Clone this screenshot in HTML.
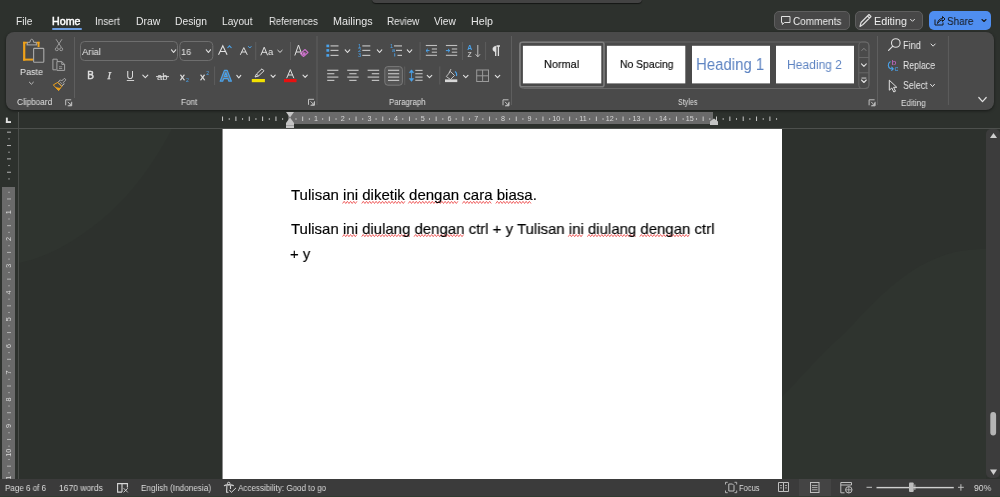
<!DOCTYPE html><html><head><meta charset="utf-8"><style>*{margin:0;padding:0;box-sizing:border-box}
html,body{width:1000px;height:497px;overflow:hidden}
body{background:#2d312d;font-family:"Liberation Sans",sans-serif;position:relative}
.a{position:absolute}
.tx{position:absolute;white-space:pre;line-height:1;transform-origin:0 0;will-change:transform}
svg.ic{position:absolute;left:0;top:0;width:1000px;height:497px;will-change:transform}
</style></head><body>
<div class="a" style="left:371.7px;top:-10px;width:270px;height:12.6px;background:#434343;border-radius:4px;box-shadow:0 0.8px 1px rgba(0,0,0,.55)"></div>
<div class="a" style="left:52px;top:28px;width:30px;height:2px;background:#6b9ce0;border-radius:1px"></div>
<div class="a" style="left:774px;top:11px;width:76px;height:19px;border:1px solid #5e5e5e;border-radius:5px;background:#474747"></div>
<div class="a" style="left:855px;top:11px;width:68px;height:19px;border:1px solid #5e5e5e;border-radius:5px;background:#474747"></div>
<div class="a" style="left:929px;top:11px;width:62px;height:19px;border-radius:5px;background:#4f8ef0"></div>
<div class="a" style="left:6px;top:32px;width:988px;height:78px;background:#4a4a4a;border-radius:8px;box-shadow:0 1px 3px rgba(0,0,0,.5)"></div>
<div class="a" style="left:18px;top:112px;width:1px;height:367px;background:#4a4d4a"></div>
<div class="a" style="left:0;top:128px;width:1000px;height:1px;background:#4d504d"></div>
<div class="a" style="left:288px;top:112px;width:425px;height:12px;background:#6a6a6a"></div>
<div class="a" style="left:2px;top:187px;width:13px;height:292px;background:#6a6a6a"></div>
<svg class="a" style="left:0;top:0" width="1000" height="497"><path d="M19 129H172C150 170 120 215 60 248C45 256 30 261 19 263Z" fill="#2f342f"/><path d="M782 397C800 378 825 350 845 333C870 305 895 280 920 266C945 252 965 249 986 249V479H782Z" fill="#2f342f"/></svg>
<div class="a" style="left:222px;top:129px;width:1px;height:350px;background:#8c8c8c"></div>
<div class="a" style="left:223px;top:129px;width:559px;height:350px;background:#fff"></div>
<div class="a" style="left:986px;top:129px;width:14px;height:349px;background:#3c3c3c;border-radius:5px"></div>
<div class="a" style="left:0;top:479px;width:1000px;height:18px;background:#3b3b3b"></div>
<div class="a" style="left:799px;top:479px;width:32px;height:17px;background:#444444"></div>
<div class="a" style="left:0;top:496px;width:1000px;height:1px;background:#2f3b30"></div>

<svg class="ic" viewBox="0 0 1000 497">
<rect x="222.05" y="116.5" width="1" height="4.5" fill="#c8c8c8" rx="0"/>
<rect x="228.72500000000002" y="118.2" width="1" height="1.6" fill="#c8c8c8" rx="0"/>
<rect x="235.4" y="116.5" width="1" height="4.5" fill="#c8c8c8" rx="0"/>
<rect x="242.07500000000002" y="118.2" width="1" height="1.6" fill="#c8c8c8" rx="0"/>
<rect x="248.75" y="116.5" width="1" height="4.5" fill="#c8c8c8" rx="0"/>
<rect x="255.425" y="118.2" width="1" height="1.6" fill="#c8c8c8" rx="0"/>
<rect x="262.1" y="116.5" width="1" height="4.5" fill="#c8c8c8" rx="0"/>
<rect x="268.77500000000003" y="118.2" width="1" height="1.6" fill="#c8c8c8" rx="0"/>
<rect x="275.45" y="116.5" width="1" height="4.5" fill="#c8c8c8" rx="0"/>
<rect x="282.125" y="118.2" width="1" height="1.6" fill="#c8c8c8" rx="0"/>
<rect x="295.475" y="118.2" width="1" height="1.6" fill="#c8c8c8" rx="0"/>
<rect x="302.15000000000003" y="116.5" width="1" height="4.5" fill="#c8c8c8" rx="0"/>
<rect x="308.825" y="118.2" width="1" height="1.6" fill="#c8c8c8" rx="0"/>
<text x="316.0" y="121.3" font-size="7.2" fill="#d8d8d8" text-anchor="middle" font-family="Liberation Sans">1</text>
<rect x="322.175" y="118.2" width="1" height="1.6" fill="#c8c8c8" rx="0"/>
<rect x="328.85" y="116.5" width="1" height="4.5" fill="#c8c8c8" rx="0"/>
<rect x="335.52500000000003" y="118.2" width="1" height="1.6" fill="#c8c8c8" rx="0"/>
<text x="342.7" y="121.3" font-size="7.2" fill="#d8d8d8" text-anchor="middle" font-family="Liberation Sans">2</text>
<rect x="348.875" y="118.2" width="1" height="1.6" fill="#c8c8c8" rx="0"/>
<rect x="355.55" y="116.5" width="1" height="4.5" fill="#c8c8c8" rx="0"/>
<rect x="362.225" y="118.2" width="1" height="1.6" fill="#c8c8c8" rx="0"/>
<text x="369.4" y="121.3" font-size="7.2" fill="#d8d8d8" text-anchor="middle" font-family="Liberation Sans">3</text>
<rect x="375.575" y="118.2" width="1" height="1.6" fill="#c8c8c8" rx="0"/>
<rect x="382.25" y="116.5" width="1" height="4.5" fill="#c8c8c8" rx="0"/>
<rect x="388.925" y="118.2" width="1" height="1.6" fill="#c8c8c8" rx="0"/>
<text x="396.1" y="121.3" font-size="7.2" fill="#d8d8d8" text-anchor="middle" font-family="Liberation Sans">4</text>
<rect x="402.275" y="118.2" width="1" height="1.6" fill="#c8c8c8" rx="0"/>
<rect x="408.95" y="116.5" width="1" height="4.5" fill="#c8c8c8" rx="0"/>
<rect x="415.625" y="118.2" width="1" height="1.6" fill="#c8c8c8" rx="0"/>
<text x="422.8" y="121.3" font-size="7.2" fill="#d8d8d8" text-anchor="middle" font-family="Liberation Sans">5</text>
<rect x="428.975" y="118.2" width="1" height="1.6" fill="#c8c8c8" rx="0"/>
<rect x="435.65" y="116.5" width="1" height="4.5" fill="#c8c8c8" rx="0"/>
<rect x="442.32500000000005" y="118.2" width="1" height="1.6" fill="#c8c8c8" rx="0"/>
<text x="449.5" y="121.3" font-size="7.2" fill="#d8d8d8" text-anchor="middle" font-family="Liberation Sans">6</text>
<rect x="455.675" y="118.2" width="1" height="1.6" fill="#c8c8c8" rx="0"/>
<rect x="462.35" y="116.5" width="1" height="4.5" fill="#c8c8c8" rx="0"/>
<rect x="469.025" y="118.2" width="1" height="1.6" fill="#c8c8c8" rx="0"/>
<text x="476.2" y="121.3" font-size="7.2" fill="#d8d8d8" text-anchor="middle" font-family="Liberation Sans">7</text>
<rect x="482.375" y="118.2" width="1" height="1.6" fill="#c8c8c8" rx="0"/>
<rect x="489.05" y="116.5" width="1" height="4.5" fill="#c8c8c8" rx="0"/>
<rect x="495.725" y="118.2" width="1" height="1.6" fill="#c8c8c8" rx="0"/>
<text x="502.9" y="121.3" font-size="7.2" fill="#d8d8d8" text-anchor="middle" font-family="Liberation Sans">8</text>
<rect x="509.07500000000005" y="118.2" width="1" height="1.6" fill="#c8c8c8" rx="0"/>
<rect x="515.75" y="116.5" width="1" height="4.5" fill="#c8c8c8" rx="0"/>
<rect x="522.425" y="118.2" width="1" height="1.6" fill="#c8c8c8" rx="0"/>
<text x="529.6" y="121.3" font-size="7.2" fill="#d8d8d8" text-anchor="middle" font-family="Liberation Sans">9</text>
<rect x="535.775" y="118.2" width="1" height="1.6" fill="#c8c8c8" rx="0"/>
<rect x="542.45" y="116.5" width="1" height="4.5" fill="#c8c8c8" rx="0"/>
<rect x="549.125" y="118.2" width="1" height="1.6" fill="#c8c8c8" rx="0"/>
<text x="556.3" y="121.3" font-size="7.2" fill="#d8d8d8" text-anchor="middle" font-family="Liberation Sans">10</text>
<rect x="562.475" y="118.2" width="1" height="1.6" fill="#c8c8c8" rx="0"/>
<rect x="569.15" y="116.5" width="1" height="4.5" fill="#c8c8c8" rx="0"/>
<rect x="575.825" y="118.2" width="1" height="1.6" fill="#c8c8c8" rx="0"/>
<text x="583.0" y="121.3" font-size="7.2" fill="#d8d8d8" text-anchor="middle" font-family="Liberation Sans">11</text>
<rect x="589.175" y="118.2" width="1" height="1.6" fill="#c8c8c8" rx="0"/>
<rect x="595.85" y="116.5" width="1" height="4.5" fill="#c8c8c8" rx="0"/>
<rect x="602.525" y="118.2" width="1" height="1.6" fill="#c8c8c8" rx="0"/>
<text x="609.7" y="121.3" font-size="7.2" fill="#d8d8d8" text-anchor="middle" font-family="Liberation Sans">12</text>
<rect x="615.875" y="118.2" width="1" height="1.6" fill="#c8c8c8" rx="0"/>
<rect x="622.55" y="116.5" width="1" height="4.5" fill="#c8c8c8" rx="0"/>
<rect x="629.225" y="118.2" width="1" height="1.6" fill="#c8c8c8" rx="0"/>
<text x="636.4" y="121.3" font-size="7.2" fill="#d8d8d8" text-anchor="middle" font-family="Liberation Sans">13</text>
<rect x="642.575" y="118.2" width="1" height="1.6" fill="#c8c8c8" rx="0"/>
<rect x="649.25" y="116.5" width="1" height="4.5" fill="#c8c8c8" rx="0"/>
<rect x="655.925" y="118.2" width="1" height="1.6" fill="#c8c8c8" rx="0"/>
<text x="663.1" y="121.3" font-size="7.2" fill="#d8d8d8" text-anchor="middle" font-family="Liberation Sans">14</text>
<rect x="669.275" y="118.2" width="1" height="1.6" fill="#c8c8c8" rx="0"/>
<rect x="675.95" y="116.5" width="1" height="4.5" fill="#c8c8c8" rx="0"/>
<rect x="682.625" y="118.2" width="1" height="1.6" fill="#c8c8c8" rx="0"/>
<text x="689.8" y="121.3" font-size="7.2" fill="#d8d8d8" text-anchor="middle" font-family="Liberation Sans">15</text>
<rect x="695.975" y="118.2" width="1" height="1.6" fill="#c8c8c8" rx="0"/>
<rect x="702.65" y="116.5" width="1" height="4.5" fill="#c8c8c8" rx="0"/>
<rect x="709.325" y="118.2" width="1" height="1.6" fill="#c8c8c8" rx="0"/>
<rect x="716.0" y="116.5" width="1" height="4.5" fill="#c8c8c8" rx="0"/>
<rect x="722.675" y="118.2" width="1" height="1.6" fill="#c8c8c8" rx="0"/>
<rect x="729.35" y="116.5" width="1" height="4.5" fill="#c8c8c8" rx="0"/>
<rect x="736.025" y="118.2" width="1" height="1.6" fill="#c8c8c8" rx="0"/>
<rect x="742.7" y="116.5" width="1" height="4.5" fill="#c8c8c8" rx="0"/>
<rect x="749.375" y="118.2" width="1" height="1.6" fill="#c8c8c8" rx="0"/>
<rect x="756.05" y="116.5" width="1" height="4.5" fill="#c8c8c8" rx="0"/>
<rect x="762.725" y="118.2" width="1" height="1.6" fill="#c8c8c8" rx="0"/>
<rect x="769.4" y="116.5" width="1" height="4.5" fill="#c8c8c8" rx="0"/>
<rect x="776.075" y="118.2" width="1" height="1.6" fill="#c8c8c8" rx="0"/>
<path d="M286 112H294L290 117.5Z" stroke="none" stroke-width="0" fill="#c4c4c4" />
<path d="M290 117.5L294 123H286Z" stroke="none" stroke-width="0" fill="#c4c4c4" />
<rect x="286" y="123" width="8" height="5" fill="#c4c4c4" rx="0"/>
<rect x="286" y="125.3" width="8" height="0.6" fill="#8a8a8a" rx="0"/>
<path d="M710 125V121.5L714 118.5L718 121.5V125Z" stroke="none" stroke-width="0" fill="#c4c4c4" />
<clipPath id="vr"><rect x="0" y="129" width="18" height="350"/></clipPath><g clip-path="url(#vr)">
<rect x="7" y="131.66" width="4" height="1" fill="#b4b4b4" rx="0"/>
<rect x="8.3" y="138.34" width="1.4" height="1" fill="#b4b4b4" rx="0"/>
<rect x="7" y="145.01999999999998" width="4" height="1" fill="#b4b4b4" rx="0"/>
<rect x="8.3" y="151.7" width="1.4" height="1" fill="#b4b4b4" rx="0"/>
<rect x="7" y="158.38" width="4" height="1" fill="#b4b4b4" rx="0"/>
<rect x="8.3" y="165.06" width="1.4" height="1" fill="#b4b4b4" rx="0"/>
<rect x="7" y="171.74" width="4" height="1" fill="#b4b4b4" rx="0"/>
<rect x="8.3" y="178.42" width="1.4" height="1" fill="#b4b4b4" rx="0"/>
<rect x="8.3" y="191.78" width="1.4" height="1" fill="#b4b4b4" rx="0"/>
<rect x="7" y="198.45999999999998" width="4" height="1" fill="#b4b4b4" rx="0"/>
<rect x="8.3" y="205.14" width="1.4" height="1" fill="#b4b4b4" rx="0"/>
<text x="0" y="0" font-size="7.2" fill="#dadada" text-anchor="middle" font-family="Liberation Sans" transform="translate(11.3 212.3) rotate(-90)">1</text>
<rect x="8.3" y="218.5" width="1.4" height="1" fill="#b4b4b4" rx="0"/>
<rect x="7" y="225.18" width="4" height="1" fill="#b4b4b4" rx="0"/>
<rect x="8.3" y="231.85999999999999" width="1.4" height="1" fill="#b4b4b4" rx="0"/>
<text x="0" y="0" font-size="7.2" fill="#dadada" text-anchor="middle" font-family="Liberation Sans" transform="translate(11.3 239.0) rotate(-90)">2</text>
<rect x="8.3" y="245.22" width="1.4" height="1" fill="#b4b4b4" rx="0"/>
<rect x="7" y="251.89999999999998" width="4" height="1" fill="#b4b4b4" rx="0"/>
<rect x="8.3" y="258.58" width="1.4" height="1" fill="#b4b4b4" rx="0"/>
<text x="0" y="0" font-size="7.2" fill="#dadada" text-anchor="middle" font-family="Liberation Sans" transform="translate(11.3 265.8) rotate(-90)">3</text>
<rect x="8.3" y="271.94" width="1.4" height="1" fill="#b4b4b4" rx="0"/>
<rect x="7" y="278.62" width="4" height="1" fill="#b4b4b4" rx="0"/>
<rect x="8.3" y="285.29999999999995" width="1.4" height="1" fill="#b4b4b4" rx="0"/>
<text x="0" y="0" font-size="7.2" fill="#dadada" text-anchor="middle" font-family="Liberation Sans" transform="translate(11.3 292.5) rotate(-90)">4</text>
<rect x="8.3" y="298.65999999999997" width="1.4" height="1" fill="#b4b4b4" rx="0"/>
<rect x="7" y="305.34" width="4" height="1" fill="#b4b4b4" rx="0"/>
<rect x="8.3" y="312.02" width="1.4" height="1" fill="#b4b4b4" rx="0"/>
<text x="0" y="0" font-size="7.2" fill="#dadada" text-anchor="middle" font-family="Liberation Sans" transform="translate(11.3 319.2) rotate(-90)">5</text>
<rect x="8.3" y="325.38" width="1.4" height="1" fill="#b4b4b4" rx="0"/>
<rect x="7" y="332.05999999999995" width="4" height="1" fill="#b4b4b4" rx="0"/>
<rect x="8.3" y="338.74" width="1.4" height="1" fill="#b4b4b4" rx="0"/>
<text x="0" y="0" font-size="7.2" fill="#dadada" text-anchor="middle" font-family="Liberation Sans" transform="translate(11.3 345.9) rotate(-90)">6</text>
<rect x="8.3" y="352.1" width="1.4" height="1" fill="#b4b4b4" rx="0"/>
<rect x="7" y="358.78" width="4" height="1" fill="#b4b4b4" rx="0"/>
<rect x="8.3" y="365.46" width="1.4" height="1" fill="#b4b4b4" rx="0"/>
<text x="0" y="0" font-size="7.2" fill="#dadada" text-anchor="middle" font-family="Liberation Sans" transform="translate(11.3 372.6) rotate(-90)">7</text>
<rect x="8.3" y="378.82" width="1.4" height="1" fill="#b4b4b4" rx="0"/>
<rect x="7" y="385.5" width="4" height="1" fill="#b4b4b4" rx="0"/>
<rect x="8.3" y="392.17999999999995" width="1.4" height="1" fill="#b4b4b4" rx="0"/>
<text x="0" y="0" font-size="7.2" fill="#dadada" text-anchor="middle" font-family="Liberation Sans" transform="translate(11.3 399.4) rotate(-90)">8</text>
<rect x="8.3" y="405.53999999999996" width="1.4" height="1" fill="#b4b4b4" rx="0"/>
<rect x="7" y="412.22" width="4" height="1" fill="#b4b4b4" rx="0"/>
<rect x="8.3" y="418.9" width="1.4" height="1" fill="#b4b4b4" rx="0"/>
<text x="0" y="0" font-size="7.2" fill="#dadada" text-anchor="middle" font-family="Liberation Sans" transform="translate(11.3 426.1) rotate(-90)">9</text>
<rect x="8.3" y="432.26" width="1.4" height="1" fill="#b4b4b4" rx="0"/>
<rect x="7" y="438.93999999999994" width="4" height="1" fill="#b4b4b4" rx="0"/>
<rect x="8.3" y="445.62" width="1.4" height="1" fill="#b4b4b4" rx="0"/>
<text x="0" y="0" font-size="7.2" fill="#dadada" text-anchor="middle" font-family="Liberation Sans" transform="translate(11.3 452.8) rotate(-90)">10</text>
<rect x="8.3" y="458.98" width="1.4" height="1" fill="#b4b4b4" rx="0"/>
<rect x="7" y="465.65999999999997" width="4" height="1" fill="#b4b4b4" rx="0"/>
<rect x="8.3" y="472.34000000000003" width="1.4" height="1" fill="#b4b4b4" rx="0"/>
<text x="0" y="0" font-size="7.2" fill="#dadada" text-anchor="middle" font-family="Liberation Sans" transform="translate(11.3 479.5) rotate(-90)">11</text>
<rect x="8.3" y="485.69999999999993" width="1.4" height="1" fill="#b4b4b4" rx="0"/>
</g>
<rect x="5.9" y="117.6" width="1.9" height="5.4" fill="#e0e0e0" rx="0"/>
<rect x="5.9" y="121.1" width="5.1" height="1.9" fill="#e0e0e0" rx="0"/>
<path d="M781.5 16.5H790V22.5H784.5L782.3 24.5V22.5H781.5Z" stroke="#e0e0e0" stroke-width="1" fill="none" stroke-linejoin="round"/>
<path d="M860 26.5L861 22.5L869 14.5L871 16.5L863 24.5Z M867.5 16L869.5 18" stroke="#e0e0e0" stroke-width="1.1" fill="none" stroke-linejoin="round"/>
<path d="M910.5 19.3L912.5 21.3L914.5 19.3" stroke="#e0e0e0" stroke-width="1" fill="none" stroke-linecap="round" stroke-linejoin="round"/>
<path d="M935 19.5V25H943V22.5 M937.5 23.5C938 20 940 18.5 942.5 18.5V16.5L945 19L942.5 21.5V20C941 20 939 21 937.5 23.5Z" stroke="#1a1a1a" stroke-width="1" fill="none" stroke-linejoin="round"/>
<path d="M982 19.5L984.0 21.5L986 19.5" stroke="#1a1a1a" stroke-width="1.1" fill="none" stroke-linecap="round" stroke-linejoin="round"/>
<rect x="23.1" y="41.8" width="2.2" height="18.8" fill="#f0a21a" rx="0"/>
<rect x="23.1" y="58.6" width="10.2" height="2" fill="#f0a21a" rx="0"/>
<rect x="23.1" y="41.8" width="4.5" height="1.7" fill="#f0a21a" rx="0"/>
<rect x="36.3" y="41.8" width="3.2" height="1.7" fill="#f0a21a" rx="0"/>
<rect x="37.6" y="41.8" width="1.9" height="5.3" fill="#f0a21a" rx="0"/>
<path d="M26.5 44.9H37.2" stroke="#ababab" stroke-width="1" fill="none" />
<path d="M27.3 44.9V42.3H30C30.3 40 31 39.2 31.8 39.2C32.6 39.2 33.3 40 33.6 42.3H36.3V44.9" stroke="#ababab" stroke-width="1" fill="none" stroke-linejoin="round"/>
<rect x="33.6" y="48.4" width="10.2" height="13.8" fill="#4a4a4a" stroke="#ababab" stroke-width="1.1" rx="0.8"/>
<path d="M29.4 82.2L31.4 84.2L33.4 82.2" stroke="#bfbfbf" stroke-width="1" fill="none" stroke-linecap="round" stroke-linejoin="round"/>
<path d="M56 39.2L61.3 47.2M62 39.2L56.7 47.2" stroke="#a4a4a4" stroke-width="0.9" fill="none" />
<circle cx="56.8" cy="49.2" r="1.5" fill="none" stroke="#a4a4a4" stroke-width="0.9"/>
<circle cx="61.2" cy="49.2" r="1.5" fill="none" stroke="#a4a4a4" stroke-width="0.9"/>
<path d="M56.2 69.8H52.9V59.2H57.2V61.2" stroke="#a4a4a4" stroke-width="1" fill="none" />
<path d="M56.9 61.6H61.8L64.6 64.4V70.4H56.9Z M61.8 61.6V64.4H64.6" stroke="#a4a4a4" stroke-width="1" fill="none" stroke-linejoin="round"/>
<rect x="59" y="66.4" width="3.2" height="0.8" fill="#a4a4a4" rx="0"/>
<rect x="59" y="68.2" width="3.2" height="0.8" fill="#a4a4a4" rx="0"/>
<path d="M57.8 82.4L60.4 79.8L61.6 81L63.8 78.8A1.15 1.15 0 0 1 65.4 80.4L63.2 82.6L64.3 83.7L61.7 86.3Z" stroke="#b8b8b8" stroke-width="0.9" fill="none" stroke-linejoin="round"/>
<path d="M59.6 81.5L62.6 84.5" stroke="#b8b8b8" stroke-width="0.7" fill="none" />
<path d="M53.3 84.9L57.8 82.4L61.7 86.3L58.6 90.6Z" stroke="#f0a21a" stroke-width="1" fill="none" stroke-linejoin="round"/>
<path d="M56 87.5L58.6 90.3L60.2 88.3Z" stroke="#f0a21a" stroke-width="0.5" fill="#f0a21a" />
<path d="M65.7 105.3V99.8H71.2" stroke="#bfbfbf" stroke-width="1" fill="none" />
<path d="M67.7 101.8L71.2 105.3M71.2 102.8V105.3H68.7" stroke="#bfbfbf" stroke-width="1" fill="none" />
<path d="M67.7 105.8H71.7V101.8" stroke="#bfbfbf" stroke-width="1" fill="none" />
<rect x="74.0" y="37" width="1" height="61" fill="#5e5e5e" rx="0"/>
<rect x="80.5" y="41.5" width="97" height="19" fill="none" stroke="#6e6e6e" stroke-width="1" rx="4"/>
<rect x="179.8" y="41.5" width="33" height="19" fill="none" stroke="#6e6e6e" stroke-width="1" rx="4"/>
<path d="M171.5 49.8L173.6 52.5L175.7 49.8" stroke="#e0e0e0" stroke-width="1.1" fill="none" stroke-linecap="round" stroke-linejoin="round"/>
<path d="M206.3 49.8L208.4 52.5L210.5 49.8" stroke="#e0e0e0" stroke-width="1.1" fill="none" stroke-linecap="round" stroke-linejoin="round"/>
<path d="M218.5 54.8L222.8 45.8L227.1 54.8M220 51.5H225.6" stroke="#e0e0e0" stroke-width="1.1" fill="none" />
<path d="M227.5 48L229.5 45.8L231.5 48" stroke="#4aa3ec" stroke-width="1.1" fill="none" />
<path d="M240.3 54.8L243.8 47.6L247.3 54.8M241.6 52H246" stroke="#e0e0e0" stroke-width="1" fill="none" />
<path d="M248.2 46.2L249.8 48L251.4 46.2" stroke="#4aa3ec" stroke-width="1" fill="none" />
<rect x="255.2" y="42" width="1" height="18" fill="#5e5e5e" rx="0"/>
<path d="M260.8 55.3L264.2 47.2L267.6 55.3M262 52.3H266.4" stroke="#e0e0e0" stroke-width="1" fill="none" />
<text x="268" y="55.3" font-size="9.5" fill="#e0e0e0" font-family="Liberation Sans">a</text>
<path d="M277.8 50.3L280.0 52.4L282.2 50.3" stroke="#e0e0e0" stroke-width="1" fill="none" stroke-linecap="round" stroke-linejoin="round"/>
<rect x="290.0" y="42" width="1" height="18" fill="#5e5e5e" rx="0"/>
<path d="M294.8 55.5L298.5 45L302.2 55.5M296 52H300.5" stroke="#e0e0e0" stroke-width="1" fill="none" />
<path d="M300.5 53.5L305 49.5L308 52.5L303.5 56.5Z" stroke="#c86fc7" stroke-width="1.1" fill="none" stroke-linejoin="round"/>
<rect x="302.5" y="52.3" width="3" height="3" fill="#c86fc7" rx="0"/>
<text x="87.2" y="78.9" font-size="10" fill="#e0e0e0" stroke="#e0e0e0" stroke-width="0.45" font-family="Liberation Sans">B</text>
<text x="107.6" y="79" font-size="10.5" font-style="italic" fill="#e0e0e0" stroke="#e0e0e0" stroke-width="0.25" font-family="Liberation Serif">I</text>
<text x="126.5" y="78.5" font-size="10" fill="#e0e0e0" font-family="Liberation Sans">U</text>
<rect x="126.8" y="80" width="7.3" height="0.9" fill="#e0e0e0" rx="0"/>
<path d="M142.8 75.2L145.3 77.7L147.8 75.2" stroke="#e0e0e0" stroke-width="1.1" fill="none" stroke-linecap="round" stroke-linejoin="round"/>
<text x="157" y="79.5" font-size="9.5" fill="#e0e0e0" font-family="Liberation Sans">ab</text>
<rect x="156" y="76.2" width="13" height="0.9" fill="#e0e0e0" rx="0"/>
<text x="180" y="79.5" font-size="9.5" fill="#e0e0e0" stroke="#e0e0e0" stroke-width="0.3" font-family="Liberation Sans">x</text>
<text x="186" y="82.2" font-size="5.2" fill="#4aa3ec" font-family="Liberation Sans">2</text>
<text x="200.3" y="79.5" font-size="9.5" fill="#e0e0e0" stroke="#e0e0e0" stroke-width="0.3" font-family="Liberation Sans">x</text>
<text x="206.3" y="74.6" font-size="5.2" fill="#4aa3ec" font-family="Liberation Sans">2</text>
<rect x="214.1" y="66.5" width="1" height="18.5" fill="#5e5e5e" rx="0"/>
<path d="M220.2 81.2L224.4 70.4H227.2L231.4 81.2H228.9L228 78.7H223.6L222.7 81.2Z M224.5 76.4H227.1L225.8 72.8Z" stroke="#4aa3ec" stroke-width="1.2" fill="#65717c" stroke-linejoin="round" fill-rule="evenodd"/>
<path d="M236.8 75.4L238.8 77.8L240.8 75.4" stroke="#e0e0e0" stroke-width="1.1" fill="none" stroke-linecap="round" stroke-linejoin="round"/>
<path d="M255 77L256.5 74L262 68.8L264 70.8L258.5 76Z M256.5 74L258.5 76" stroke="#e0e0e0" stroke-width="1" fill="none" stroke-linejoin="round"/>
<rect x="251.8" y="79" width="13.1" height="3.2" fill="#f2e100" rx="0"/>
<path d="M271 75.2L273.1 77.4L275.2 75.2" stroke="#e0e0e0" stroke-width="1.1" fill="none" stroke-linecap="round" stroke-linejoin="round"/>
<path d="M286.7 78.2L290.3 69.6L293.9 78.2M288 75H292.6" stroke="#e0e0e0" stroke-width="1" fill="none" />
<rect x="284" y="79" width="12.5" height="3.2" fill="#e81010" rx="0"/>
<path d="M303 75.2L305.15 77.4L307.3 75.2" stroke="#e0e0e0" stroke-width="1.1" fill="none" stroke-linecap="round" stroke-linejoin="round"/>
<path d="M308.5 104.8V99.3H314" stroke="#bfbfbf" stroke-width="1" fill="none" />
<path d="M310.5 101.3L314 104.8M314 102.3V104.8H311.5" stroke="#bfbfbf" stroke-width="1" fill="none" />
<path d="M310.5 105.3H314.5V101.3" stroke="#bfbfbf" stroke-width="1" fill="none" />
<rect x="316.5" y="36" width="1" height="69" fill="#5e5e5e" rx="0"/>
<rect x="326.4" y="44.6" width="2.8" height="2.6" fill="#4aa3ec" rx="0"/>
<rect x="330.5" y="45.3" width="8" height="1.2" fill="#bfbfbf" rx="0"/>
<rect x="326.4" y="49.1" width="2.8" height="2.6" fill="#4aa3ec" rx="0"/>
<rect x="330.5" y="49.8" width="8" height="1.2" fill="#bfbfbf" rx="0"/>
<rect x="326.4" y="54.1" width="2.8" height="2.6" fill="#4aa3ec" rx="0"/>
<rect x="330.5" y="54.8" width="8" height="1.2" fill="#bfbfbf" rx="0"/>
<path d="M345.2 49.8L347.5 52.5L349.8 49.8" stroke="#e0e0e0" stroke-width="1.1" fill="none" stroke-linecap="round" stroke-linejoin="round"/>
<text x="358" y="47.9" font-size="5.5" fill="#4aa3ec" font-family="Liberation Sans">1</text>
<rect x="362.3" y="45.3" width="8" height="1.2" fill="#bfbfbf" rx="0"/>
<text x="358" y="52.4" font-size="5.5" fill="#4aa3ec" font-family="Liberation Sans">2</text>
<rect x="362.3" y="49.8" width="8" height="1.2" fill="#bfbfbf" rx="0"/>
<text x="358" y="57.4" font-size="5.5" fill="#4aa3ec" font-family="Liberation Sans">3</text>
<rect x="362.3" y="54.8" width="8" height="1.2" fill="#bfbfbf" rx="0"/>
<path d="M377.3 49.8L379.55 52.5L381.8 49.8" stroke="#e0e0e0" stroke-width="1.1" fill="none" stroke-linecap="round" stroke-linejoin="round"/>
<text x="390" y="47.8" font-size="5.5" fill="#4aa3ec" font-family="Liberation Sans">1</text>
<rect x="394" y="45.3" width="8" height="1.2" fill="#bfbfbf" rx="0"/>
<text x="392" y="52.3" font-size="5.5" fill="#4aa3ec" font-family="Liberation Sans">a</text>
<rect x="396" y="49.8" width="6" height="1.2" fill="#bfbfbf" rx="0"/>
<rect x="394.3" y="53.3" width="0.9" height="3.2" fill="#4aa3ec" rx="0"/>
<rect x="397.5" y="54.8" width="4.5" height="1.2" fill="#bfbfbf" rx="0"/>
<path d="M407.3 49.8L409.55 52.5L411.8 49.8" stroke="#e0e0e0" stroke-width="1.1" fill="none" stroke-linecap="round" stroke-linejoin="round"/>
<rect x="419.6" y="42" width="1" height="18" fill="#5e5e5e" rx="0"/>
<rect x="425.8" y="44.95" width="11.199999999999989" height="1.1" fill="#bfbfbf" rx="0"/>
<rect x="431.8" y="48.45" width="5.199999999999989" height="1.1" fill="#bfbfbf" rx="0"/>
<rect x="431.8" y="51.650000000000006" width="5.199999999999989" height="1.1" fill="#bfbfbf" rx="0"/>
<rect x="425.8" y="54.75" width="11.199999999999989" height="1.1" fill="#bfbfbf" rx="0"/>
<path d="M426 50.6H429.5M427.8 48.9L426 50.6L427.8 52.3" stroke="#4aa3ec" stroke-width="1" fill="none" />
<rect x="445.9" y="44.95" width="11.300000000000011" height="1.1" fill="#bfbfbf" rx="0"/>
<rect x="451.8" y="48.45" width="5.399999999999977" height="1.1" fill="#bfbfbf" rx="0"/>
<rect x="451.8" y="51.650000000000006" width="5.399999999999977" height="1.1" fill="#bfbfbf" rx="0"/>
<rect x="445.9" y="54.75" width="11.300000000000011" height="1.1" fill="#bfbfbf" rx="0"/>
<path d="M445.9 50.6H449.8M448 48.9L449.8 50.6L448 52.3" stroke="#4aa3ec" stroke-width="1" fill="none" />
<rect x="461.9" y="42" width="1" height="18" fill="#5e5e5e" rx="0"/>
<text x="467.2" y="50.4" font-size="6.8" font-weight="bold" fill="#4aa3ec" font-family="Liberation Sans">A</text>
<text x="467.4" y="57.3" font-size="6.8" font-weight="bold" fill="#bfbfbf" font-family="Liberation Sans">Z</text>
<path d="M477.8 45V56.8M475.6 54.3L477.8 56.8L480 54.3" stroke="#bfbfbf" stroke-width="1" fill="none" />
<rect x="485.1" y="42" width="1" height="18" fill="#5e5e5e" rx="0"/>
<path d="M496.5 46H500M495.7 46.2V56M498.4 46.2V56" stroke="#e0e0e0" stroke-width="1.3" fill="none" />
<path d="M495.7 46.2C492 46.2 491.8 51.8 495.7 51.8Z" stroke="#e0e0e0" stroke-width="0.5" fill="#e0e0e0" />
<rect x="327.2" y="69.7" width="11.199999999999989" height="1.2" fill="#bfbfbf" rx="0"/>
<rect x="327.2" y="73.10000000000001" width="7.168000000000006" height="1.2" fill="#bfbfbf" rx="0"/>
<rect x="327.2" y="76.5" width="11.199999999999989" height="1.2" fill="#bfbfbf" rx="0"/>
<rect x="327.2" y="79.80000000000001" width="7.168000000000006" height="1.2" fill="#bfbfbf" rx="0"/>
<rect x="347.2" y="69.7" width="11.400000000000034" height="1.2" fill="#bfbfbf" rx="0"/>
<rect x="349.252" y="73.10000000000001" width="7.295999999999992" height="1.2" fill="#bfbfbf" rx="0"/>
<rect x="347.2" y="76.5" width="11.400000000000034" height="1.2" fill="#bfbfbf" rx="0"/>
<rect x="349.252" y="79.80000000000001" width="7.295999999999992" height="1.2" fill="#bfbfbf" rx="0"/>
<rect x="367.6" y="69.7" width="11.599999999999966" height="1.2" fill="#bfbfbf" rx="0"/>
<rect x="371.776" y="73.10000000000001" width="7.423999999999978" height="1.2" fill="#bfbfbf" rx="0"/>
<rect x="367.6" y="76.5" width="11.599999999999966" height="1.2" fill="#bfbfbf" rx="0"/>
<rect x="371.776" y="79.80000000000001" width="7.423999999999978" height="1.2" fill="#bfbfbf" rx="0"/>
<rect x="384.8" y="66.6" width="17.6" height="18.6" fill="#555555" stroke="#7a7a7a" stroke-width="1" rx="3"/>
<rect x="388" y="69.7" width="11.199999999999989" height="1.2" fill="#bfbfbf" rx="0"/>
<rect x="388" y="73.10000000000001" width="11.199999999999989" height="1.2" fill="#bfbfbf" rx="0"/>
<rect x="388" y="76.5" width="11.199999999999989" height="1.2" fill="#bfbfbf" rx="0"/>
<rect x="388" y="79.80000000000001" width="11.199999999999989" height="1.2" fill="#bfbfbf" rx="0"/>
<rect x="404.2" y="66.5" width="1" height="18.5" fill="#5e5e5e" rx="0"/>
<path d="M409.3 72.6L411.5 69.8L413.7 72.6Z M409.3 78.6L411.5 81.4L413.7 78.6Z" stroke="#4aa3ec" stroke-width="0.6" fill="#4aa3ec" />
<path d="M411.5 72.5V78.7" stroke="#4aa3ec" stroke-width="0.8" fill="none" />
<rect x="415.3" y="69.85000000000001" width="7.3" height="1.1" fill="#bfbfbf" rx="0"/>
<rect x="415.3" y="73.15" width="7.3" height="1.1" fill="#bfbfbf" rx="0"/>
<rect x="415.3" y="76.55" width="7.3" height="1.1" fill="#bfbfbf" rx="0"/>
<rect x="415.3" y="79.75" width="7.3" height="1.1" fill="#bfbfbf" rx="0"/>
<path d="M427.2 75.3L429.5 77.7L431.8 75.3" stroke="#e0e0e0" stroke-width="1.1" fill="none" stroke-linecap="round" stroke-linejoin="round"/>
<rect x="439.3" y="66.5" width="1" height="18.0" fill="#5e5e5e" rx="0"/>
<path d="M446.3 76.5L450.5 71.5L454.5 75.5L450.5 79.5Z" stroke="#bfbfbf" stroke-width="1" fill="none" stroke-linejoin="round"/>
<path d="M449 73L451 69" stroke="#bfbfbf" stroke-width="1" fill="none" />
<path d="M455 71.5C456.5 72.5 457 74 456.5 76" stroke="#4aa3ec" stroke-width="1.1" fill="none" />
<rect x="445" y="79.4" width="12.3" height="2.7" fill="#d8d8d8" rx="0"/>
<path d="M463.5 75.3L465.75 77.7L468 75.3" stroke="#e0e0e0" stroke-width="1.1" fill="none" stroke-linecap="round" stroke-linejoin="round"/>
<rect x="476.7" y="70" width="11.8" height="11.5" fill="none" stroke="#9a9a9a" stroke-width="1" rx="0"/>
<rect x="482.1" y="70" width="1" height="11.5" fill="#9a9a9a" rx="0"/>
<rect x="476.7" y="75.3" width="11.8" height="1" fill="#9a9a9a" rx="0"/>
<path d="M495.3 75.3L497.55 77.7L499.8 75.3" stroke="#e0e0e0" stroke-width="1.1" fill="none" stroke-linecap="round" stroke-linejoin="round"/>
<path d="M503.0 105.3V99.8H508.5" stroke="#bfbfbf" stroke-width="1" fill="none" />
<path d="M505.0 101.8L508.5 105.3M508.5 102.8V105.3H506.0" stroke="#bfbfbf" stroke-width="1" fill="none" />
<path d="M505.0 105.8H509.0V101.8" stroke="#bfbfbf" stroke-width="1" fill="none" />
<rect x="511.0" y="36" width="1" height="69" fill="#5e5e5e" rx="0"/>
<rect x="519.5" y="42" width="349.5" height="46.5" fill="none" stroke="#676767" stroke-width="1" rx="4"/>
<rect x="520" y="42.3" width="84" height="44.5" fill="none" stroke="#7c7c7c" stroke-width="1.6" rx="2"/>
<rect x="522.9" y="45.8" width="78.4" height="37.6" fill="#ffffff" rx="0"/>
<rect x="606.9" y="45.8" width="78.4" height="37.6" fill="#ffffff" rx="0"/>
<rect x="692" y="45.8" width="78" height="37.6" fill="#ffffff" rx="0"/>
<rect x="776" y="45.8" width="78" height="37.6" fill="#ffffff" rx="0"/>
<rect x="858.8" y="42" width="10.2" height="46.5" fill="none" stroke="#676767" stroke-width="1" rx="3"/>
<rect x="858.8" y="57" width="10.2" height="1" fill="#676767" rx="0"/>
<rect x="858.8" y="72.3" width="10.2" height="1" fill="#676767" rx="0"/>
<path d="M861.8 50.5L863.9 48.3L866 50.5" stroke="#8a8a8a" stroke-width="0.9" fill="none" stroke-linecap="round" stroke-linejoin="round"/>
<path d="M861.5 63.8L863.9 66.3L866.3 63.8" stroke="#e0e0e0" stroke-width="1.1" fill="none" stroke-linecap="round" stroke-linejoin="round"/>
<rect x="861.5" y="77.6" width="4.8" height="0.9" fill="#e0e0e0" rx="0"/>
<path d="M861.5 80L863.9 82.5L866.3 80" stroke="#e0e0e0" stroke-width="1.1" fill="none" stroke-linecap="round" stroke-linejoin="round"/>
<path d="M869.1 105.3V99.8H874.6" stroke="#bfbfbf" stroke-width="1" fill="none" />
<path d="M871.1 101.8L874.6 105.3M874.6 102.8V105.3H872.1" stroke="#bfbfbf" stroke-width="1" fill="none" />
<path d="M871.1 105.8H875.1V101.8" stroke="#bfbfbf" stroke-width="1" fill="none" />
<rect x="877.0" y="36" width="1" height="69" fill="#5e5e5e" rx="0"/>
<circle cx="895.8" cy="43" r="4.3" fill="none" stroke="#e0e0e0" stroke-width="1.1"/>
<path d="M892.8 46.2L888.6 50.4" stroke="#e0e0e0" stroke-width="1.2" fill="none" stroke-linecap="round"/>
<path d="M931 44L933.1 46.2L935.2 44" stroke="#e0e0e0" stroke-width="1" fill="none" stroke-linecap="round" stroke-linejoin="round"/>
<text x="891.8" y="65.4" font-size="8" fill="#d66ad6" font-family="Liberation Sans">b</text>
<text x="894.4" y="70.9" font-size="7.6" fill="#4aa3ec" font-family="Liberation Sans">c</text>
<path d="M890.2 61.8C887.6 63.2 887.6 67.6 890.6 68.8H893.2M891.7 67.2L893.3 68.8L891.7 70.4" stroke="#4aa3ec" stroke-width="1.1" fill="none" stroke-linejoin="round" stroke-linecap="round"/>
<path d="M889.3 80.2V90.2L891.8 88L893.8 92L895.5 91.2L893.6 87.3H896.8Z" stroke="#e0e0e0" stroke-width="1" fill="none" stroke-linejoin="round"/>
<path d="M930.5 84.3L932.5 86.6L934.5 84.3" stroke="#e0e0e0" stroke-width="1" fill="none" stroke-linecap="round" stroke-linejoin="round"/>
<rect x="947.9" y="36" width="1" height="69" fill="#5e5e5e" rx="0"/>
<path d="M978.8 97.5L982.5 101.6L986.2 97.5" stroke="#e0e0e0" stroke-width="1.2" fill="none" stroke-linecap="round" stroke-linejoin="round"/>
<path d="M990 138L993.5 133L997 138Z" stroke="none" stroke-width="0" fill="#cfcfcf" />
<path d="M990 469.5L993.5 475L997 469.5Z" stroke="none" stroke-width="0" fill="#cfcfcf" />
<rect x="990.3" y="412" width="5.8" height="23.5" fill="#b5b5b5" rx="2.9"/>
<path d="M122 492.1H117.6V483.6H127.4V487.6M122 483.6V492.1" stroke="#d6d6d6" stroke-width="1.1" fill="none" />
<path d="M123.6 488.2L127.8 492.4M127.8 488.2L123.6 492.4" stroke="#d6d6d6" stroke-width="0.9" fill="none" />
<circle cx="228.7" cy="483.5" r="1.25" fill="none" stroke="#d6d6d6" stroke-width="1"/>
<path d="M224.4 485.6C225.6 484.6 227.2 484.9 228.7 484.9C230.2 484.9 231.8 484.6 233.3 485.6" stroke="#d6d6d6" stroke-width="1.2" fill="none" stroke-linecap="round"/>
<path d="M226.9 485.8L226.6 492.3H228M230.5 485.8V488.4" stroke="#d6d6d6" stroke-width="1.1" fill="none" stroke-linecap="round" stroke-linejoin="round"/>
<path d="M229.6 490.2L231.4 492.4L235.7 488.2" stroke="#d6d6d6" stroke-width="1" fill="none" stroke-linecap="round" stroke-linejoin="round"/>
<path d="M725.5 484.5V482.3H727.7M734.5 482.3H736.7V484.5M736.7 490.5V492.7H734.5M727.7 492.7H725.5V490.5" stroke="#bfbfbf" stroke-width="0.9" fill="none" />
<path d="M728.8 484H732.5L734 485.5V491H728.8Z" stroke="#bfbfbf" stroke-width="1" fill="none" />
<path d="M778.5 482.5H783.5V491.5H778.5Z M783.5 482.5H788.5V491.5H783.5Z" stroke="#bfbfbf" stroke-width="1" fill="none" />
<rect x="780" y="485" width="2" height="0.8" fill="#bfbfbf" rx="0"/>
<rect x="780" y="487.5" width="2" height="0.8" fill="#bfbfbf" rx="0"/>
<rect x="785" y="485" width="2" height="0.8" fill="#bfbfbf" rx="0"/>
<rect x="785" y="487.5" width="2" height="0.8" fill="#bfbfbf" rx="0"/>
<rect x="810.5" y="482.5" width="8.5" height="10" fill="none" stroke="#bfbfbf" stroke-width="1" rx="0"/>
<rect x="812" y="485" width="5.5" height="0.8" fill="#bfbfbf" rx="0"/>
<rect x="812" y="487.2" width="5.5" height="0.8" fill="#bfbfbf" rx="0"/>
<rect x="812" y="489.4" width="5.5" height="0.8" fill="#bfbfbf" rx="0"/>
<path d="M847 482.5H840.8V492.8H844.5 M840.8 485H851.5V482.5H847" stroke="#bfbfbf" stroke-width="1" fill="none" />
<circle cx="848.8" cy="489.8" r="3.2" fill="#3b3b3b" stroke="#bfbfbf" stroke-width="1"/>
<path d="M845.6 489.8H852M848.8 486.6V493" stroke="#bfbfbf" stroke-width="0.8" fill="none" />
<rect x="866.5" y="486.8" width="5.5" height="1" fill="#bfbfbf" rx="0"/>
<rect x="876.5" y="486.9" width="77.3" height="1.4" fill="#cfcfcf" rx="0"/>
<rect x="909" y="482.5" width="4.7" height="9.5" fill="#bdbdbd" rx="1"/>
<rect x="914.5" y="484.5" width="0.8" height="5.5" fill="#cfcfcf" rx="0"/>
<rect x="958" y="486.8" width="5.8" height="1" fill="#bfbfbf" rx="0"/>
<rect x="960.4" y="484.2" width="1" height="6.5" fill="#bfbfbf" rx="0"/>
<polyline points="342.57,203.50 344.17,201.30 345.77,203.50 347.37,201.30 348.97,203.50 350.57,201.30 352.17,203.50 353.77,201.30 355.37,203.50 356.97,201.30" fill="none" stroke="#ee5555" stroke-width="0.9"/>
<polyline points="361.71,203.50 363.31,201.30 364.91,203.50 366.51,201.30 368.11,203.50 369.71,201.30 371.31,203.50 372.91,201.30 374.51,203.50 376.11,201.30 377.71,203.50 379.31,201.30 380.91,203.50 382.51,201.30 384.11,203.50 385.71,201.30 387.31,203.50 388.91,201.30 390.51,203.50 392.11,201.30 393.71,203.50 395.31,201.30 396.91,203.50 398.51,201.30 400.11,203.50 401.71,201.30 403.31,203.50 404.91,201.30" fill="none" stroke="#ee5555" stroke-width="0.9"/>
<polyline points="408.32,203.50 409.92,201.30 411.52,203.50 413.12,201.30 414.72,203.50 416.32,201.30 417.92,203.50 419.52,201.30 421.12,203.50 422.72,201.30 424.32,203.50 425.92,201.30 427.52,203.50 429.12,201.30 430.72,203.50 432.32,201.30 433.92,203.50 435.52,201.30 437.12,203.50 438.72,201.30 440.32,203.50 441.92,201.30 443.52,203.50 445.12,201.30 446.72,203.50 448.32,201.30 449.92,203.50 451.52,201.30 453.12,203.50 454.72,201.30 456.32,203.50 457.92,201.30" fill="none" stroke="#ee5555" stroke-width="0.9"/>
<polyline points="462.46,203.50 464.06,201.30 465.66,203.50 467.26,201.30 468.86,203.50 470.46,201.30 472.06,203.50 473.66,201.30 475.26,203.50 476.86,201.30 478.46,203.50 480.06,201.30 481.66,203.50 483.26,201.30 484.86,203.50 486.46,201.30 488.06,203.50 489.66,201.30 491.26,203.50" fill="none" stroke="#ee5555" stroke-width="0.9"/>
<polyline points="495.76,203.50 497.36,201.30 498.96,203.50 500.56,201.30 502.16,203.50 503.76,201.30 505.36,203.50 506.96,201.30 508.56,203.50 510.16,201.30 511.76,203.50 513.36,201.30 514.96,203.50 516.56,201.30 518.16,203.50 519.76,201.30 521.36,203.50 522.96,201.30 524.56,203.50 526.16,201.30 527.76,203.50 529.36,201.30 530.96,203.50" fill="none" stroke="#ee5555" stroke-width="0.9"/>
<polyline points="342.51,236.70 344.11,234.50 345.71,236.70 347.31,234.50 348.91,236.70 350.51,234.50 352.11,236.70 353.71,234.50 355.31,236.70 356.91,234.50" fill="none" stroke="#ee5555" stroke-width="0.9"/>
<polyline points="361.63,236.70 363.23,234.50 364.83,236.70 366.43,234.50 368.03,236.70 369.63,234.50 371.23,236.70 372.83,234.50 374.43,236.70 376.03,234.50 377.63,236.70 379.23,234.50 380.83,236.70 382.43,234.50 384.03,236.70 385.63,234.50 387.23,236.70 388.83,234.50 390.43,236.70 392.03,234.50 393.63,236.70 395.23,234.50 396.83,236.70 398.43,234.50 400.03,236.70 401.63,234.50 403.23,236.70 404.83,234.50 406.43,236.70 408.03,234.50 409.63,236.70" fill="none" stroke="#ee5555" stroke-width="0.9"/>
<polyline points="414.03,236.70 415.63,234.50 417.23,236.70 418.83,234.50 420.43,236.70 422.03,234.50 423.63,236.70 425.23,234.50 426.83,236.70 428.43,234.50 430.03,236.70 431.63,234.50 433.23,236.70 434.83,234.50 436.43,236.70 438.03,234.50 439.63,236.70 441.23,234.50 442.83,236.70 444.43,234.50 446.03,236.70 447.63,234.50 449.23,236.70 450.83,234.50 452.43,236.70 454.03,234.50 455.63,236.70 457.23,234.50 458.83,236.70 460.43,234.50 462.03,236.70 463.63,234.50" fill="none" stroke="#ee5555" stroke-width="0.9"/>
<polyline points="568.26,236.70 569.86,234.50 571.46,236.70 573.06,234.50 574.66,236.70 576.26,234.50 577.86,236.70 579.46,234.50 581.06,236.70 582.66,234.50" fill="none" stroke="#ee5555" stroke-width="0.9"/>
<polyline points="587.40,236.70 589.00,234.50 590.60,236.70 592.20,234.50 593.80,236.70 595.40,234.50 597.00,236.70 598.60,234.50 600.20,236.70 601.80,234.50 603.40,236.70 605.00,234.50 606.60,236.70 608.20,234.50 609.80,236.70 611.40,234.50 613.00,236.70 614.60,234.50 616.20,236.70 617.80,234.50 619.40,236.70 621.00,234.50 622.60,236.70 624.20,234.50 625.80,236.70 627.40,234.50 629.00,236.70 630.60,234.50 632.20,236.70 633.80,234.50 635.40,236.70" fill="none" stroke="#ee5555" stroke-width="0.9"/>
<polyline points="639.78,236.70 641.38,234.50 642.98,236.70 644.58,234.50 646.18,236.70 647.78,234.50 649.38,236.70 650.98,234.50 652.58,236.70 654.18,234.50 655.78,236.70 657.38,234.50 658.98,236.70 660.58,234.50 662.18,236.70 663.78,234.50 665.38,236.70 666.98,234.50 668.58,236.70 670.18,234.50 671.78,236.70 673.38,234.50 674.98,236.70 676.58,234.50 678.18,236.70 679.78,234.50 681.38,236.70 682.98,234.50 684.58,236.70 686.18,234.50 687.78,236.70 689.38,234.50" fill="none" stroke="#ee5555" stroke-width="0.9"/>
</svg>
<div class="tx" style="left:16.00px;top:16.87px;font-size:10.2px;font-weight:400;color:#e8e8e8;transform:scaleX(1.0000);letter-spacing:0px;font-family:'Liberation Sans',sans-serif;-webkit-text-stroke:0px #e8e8e8">File</div>
<div class="tx" style="left:52.20px;top:16.87px;font-size:10.2px;font-weight:400;color:#ffffff;transform:scaleX(1.0464);letter-spacing:0px;font-family:'Liberation Sans',sans-serif;-webkit-text-stroke:0.45px #ffffff">Home</div>
<div class="tx" style="left:95.20px;top:16.87px;font-size:10.2px;font-weight:400;color:#e8e8e8;transform:scaleX(0.9721);letter-spacing:0px;font-family:'Liberation Sans',sans-serif;-webkit-text-stroke:0px #e8e8e8">Insert</div>
<div class="tx" style="left:136.20px;top:16.87px;font-size:10.2px;font-weight:400;color:#e8e8e8;transform:scaleX(1.0204);letter-spacing:0px;font-family:'Liberation Sans',sans-serif;-webkit-text-stroke:0px #e8e8e8">Draw</div>
<div class="tx" style="left:174.70px;top:16.87px;font-size:10.2px;font-weight:400;color:#e8e8e8;transform:scaleX(1.0094);letter-spacing:0px;font-family:'Liberation Sans',sans-serif;-webkit-text-stroke:0px #e8e8e8">Design</div>
<div class="tx" style="left:222.00px;top:16.87px;font-size:10.2px;font-weight:400;color:#e8e8e8;transform:scaleX(0.9955);letter-spacing:0px;font-family:'Liberation Sans',sans-serif;-webkit-text-stroke:0px #e8e8e8">Layout</div>
<div class="tx" style="left:268.80px;top:16.87px;font-size:10.2px;font-weight:400;color:#e8e8e8;transform:scaleX(0.9383);letter-spacing:0px;font-family:'Liberation Sans',sans-serif;-webkit-text-stroke:0px #e8e8e8">References</div>
<div class="tx" style="left:333.00px;top:16.87px;font-size:10.2px;font-weight:400;color:#e8e8e8;transform:scaleX(1.0575);letter-spacing:0px;font-family:'Liberation Sans',sans-serif;-webkit-text-stroke:0px #e8e8e8">Mailings</div>
<div class="tx" style="left:386.80px;top:16.87px;font-size:10.2px;font-weight:400;color:#e8e8e8;transform:scaleX(0.9661);letter-spacing:0px;font-family:'Liberation Sans',sans-serif;-webkit-text-stroke:0px #e8e8e8">Review</div>
<div class="tx" style="left:434.00px;top:16.87px;font-size:10.2px;font-weight:400;color:#e8e8e8;transform:scaleX(1.0000);letter-spacing:0px;font-family:'Liberation Sans',sans-serif;-webkit-text-stroke:0px #e8e8e8">View</div>
<div class="tx" style="left:471.10px;top:16.87px;font-size:10.2px;font-weight:400;color:#e8e8e8;transform:scaleX(1.0500);letter-spacing:0px;font-family:'Liberation Sans',sans-serif;-webkit-text-stroke:0px #e8e8e8">Help</div>
<div class="tx" style="left:793.20px;top:15.86px;font-size:10.8px;font-weight:400;color:#eeeeee;transform:scaleX(0.9279);letter-spacing:0px;font-family:'Liberation Sans',sans-serif;-webkit-text-stroke:0px #eeeeee">Comments</div>
<div class="tx" style="left:873.80px;top:15.86px;font-size:10.8px;font-weight:400;color:#eeeeee;transform:scaleX(0.9963);letter-spacing:0px;font-family:'Liberation Sans',sans-serif;-webkit-text-stroke:0px #eeeeee">Editing</div>
<div class="tx" style="left:946.50px;top:15.86px;font-size:10.8px;font-weight:400;color:#151515;transform:scaleX(0.9174);letter-spacing:0px;font-family:'Liberation Sans',sans-serif;-webkit-text-stroke:0px #151515">Share</div>
<div class="tx" style="left:20.00px;top:67.81px;font-size:9.2px;font-weight:400;color:#e8e8e8;transform:scaleX(0.9762);letter-spacing:0px;font-family:'Liberation Sans',sans-serif;-webkit-text-stroke:0px #e8e8e8">Paste</div>
<div class="tx" style="left:17.40px;top:97.80px;font-size:8.5px;font-weight:400;color:#e0e0e0;transform:scaleX(0.9674);letter-spacing:0px;font-family:'Liberation Sans',sans-serif;-webkit-text-stroke:0px #e0e0e0">Clipboard</div>
<div class="tx" style="left:81.90px;top:46.52px;font-size:9.9px;font-weight:400;color:#e6e6e6;transform:scaleX(0.9589);letter-spacing:0px;font-family:'Liberation Sans',sans-serif;-webkit-text-stroke:0px #e6e6e6">Arial</div>
<div class="tx" style="left:181.00px;top:46.52px;font-size:9.9px;font-weight:400;color:#e6e6e6;transform:scaleX(0.9279);letter-spacing:0px;font-family:'Liberation Sans',sans-serif;-webkit-text-stroke:0px #e6e6e6">16</div>
<div class="tx" style="left:180.90px;top:97.80px;font-size:8.5px;font-weight:400;color:#e0e0e0;transform:scaleX(0.9562);letter-spacing:0px;font-family:'Liberation Sans',sans-serif;-webkit-text-stroke:0px #e0e0e0">Font</div>
<div class="tx" style="left:389.40px;top:97.50px;font-size:8.5px;font-weight:400;color:#e0e0e0;transform:scaleX(0.9199);letter-spacing:0px;font-family:'Liberation Sans',sans-serif;-webkit-text-stroke:0px #e0e0e0">Paragraph</div>
<div class="tx" style="left:543.70px;top:58.73px;font-size:11.3px;font-weight:400;color:#111111;transform:scaleX(0.9658);letter-spacing:0px;font-family:'Liberation Sans',sans-serif;-webkit-text-stroke:0.2px #111111">Normal</div>
<div class="tx" style="left:619.80px;top:58.73px;font-size:11.3px;font-weight:400;color:#111111;transform:scaleX(0.9180);letter-spacing:0px;font-family:'Liberation Sans',sans-serif;-webkit-text-stroke:0.2px #111111">No Spacing</div>
<div class="tx" style="left:696.20px;top:56.34px;font-size:17.2px;font-weight:400;color:#5e84c2;transform:scaleX(0.8702);letter-spacing:0px;font-family:'Liberation Sans',sans-serif;-webkit-text-stroke:0px #5e84c2">Heading 1</div>
<div class="tx" style="left:787.00px;top:59.22px;font-size:12.5px;font-weight:400;color:#5e84c2;transform:scaleX(0.9643);letter-spacing:0px;font-family:'Liberation Sans',sans-serif;-webkit-text-stroke:0px #5e84c2">Heading 2</div>
<div class="tx" style="left:678.20px;top:97.80px;font-size:8.5px;font-weight:400;color:#e0e0e0;transform:scaleX(0.8368);letter-spacing:0px;font-family:'Liberation Sans',sans-serif;-webkit-text-stroke:0px #e0e0e0">Styles</div>
<div class="tx" style="left:903.10px;top:40.67px;font-size:10.2px;font-weight:400;color:#e8e8e8;transform:scaleX(0.8969);letter-spacing:0px;font-family:'Liberation Sans',sans-serif;-webkit-text-stroke:0px #e8e8e8">Find</div>
<div class="tx" style="left:902.50px;top:60.97px;font-size:10.2px;font-weight:400;color:#e8e8e8;transform:scaleX(0.8579);letter-spacing:0px;font-family:'Liberation Sans',sans-serif;-webkit-text-stroke:0px #e8e8e8">Replace</div>
<div class="tx" style="left:902.60px;top:80.67px;font-size:10.2px;font-weight:400;color:#e8e8e8;transform:scaleX(0.8686);letter-spacing:0px;font-family:'Liberation Sans',sans-serif;-webkit-text-stroke:0px #e8e8e8">Select</div>
<div class="tx" style="left:900.70px;top:98.50px;font-size:8.5px;font-weight:400;color:#e0e0e0;transform:scaleX(0.9481);letter-spacing:0px;font-family:'Liberation Sans',sans-serif;-webkit-text-stroke:0px #e0e0e0">Editing</div>
<div class="tx" style="left:4.90px;top:483.64px;font-size:8.7px;font-weight:400;color:#dcdcdc;transform:scaleX(0.9239);letter-spacing:0px;font-family:'Liberation Sans',sans-serif;-webkit-text-stroke:0px #dcdcdc">Page 6 of 6</div>
<div class="tx" style="left:59.20px;top:483.64px;font-size:8.7px;font-weight:400;color:#dcdcdc;transform:scaleX(0.9788);letter-spacing:0px;font-family:'Liberation Sans',sans-serif;-webkit-text-stroke:0px #dcdcdc">1670 words</div>
<div class="tx" style="left:141.10px;top:483.64px;font-size:8.7px;font-weight:400;color:#dcdcdc;transform:scaleX(0.9413);letter-spacing:0px;font-family:'Liberation Sans',sans-serif;-webkit-text-stroke:0px #dcdcdc">English (Indonesia)</div>
<div class="tx" style="left:237.80px;top:483.64px;font-size:8.7px;font-weight:400;color:#dcdcdc;transform:scaleX(0.9263);letter-spacing:0px;font-family:'Liberation Sans',sans-serif;-webkit-text-stroke:0px #dcdcdc">Accessibility: Good to go</div>
<div class="tx" style="left:738.90px;top:483.94px;font-size:8.7px;font-weight:400;color:#dcdcdc;transform:scaleX(0.8629);letter-spacing:0px;font-family:'Liberation Sans',sans-serif;-webkit-text-stroke:0px #dcdcdc">Focus</div>
<div class="tx" style="left:973.50px;top:483.64px;font-size:8.7px;font-weight:400;color:#dcdcdc;transform:scaleX(0.9844);letter-spacing:0px;font-family:'Liberation Sans',sans-serif;-webkit-text-stroke:0px #dcdcdc">90%</div>
<div class="tx" style="left:291.00px;top:187.30px;font-size:15px;font-weight:400;color:#000000;transform:scaleX(1.0017);letter-spacing:0px;font-family:'Liberation Sans',sans-serif;-webkit-text-stroke:0.15px #000000">Tulisan ini diketik dengan cara biasa.</div>
<div class="tx" style="left:291.00px;top:220.80px;font-size:15px;font-weight:400;color:#000000;transform:scaleX(0.9981);letter-spacing:0px;font-family:'Liberation Sans',sans-serif;-webkit-text-stroke:0.15px #000000">Tulisan ini diulang dengan ctrl + y Tulisan ini diulang dengan ctrl</div>
<div class="tx" style="left:290.30px;top:245.50px;font-size:15px;font-weight:400;color:#000000;transform:scaleX(0.9857);letter-spacing:0px;font-family:'Liberation Sans',sans-serif;-webkit-text-stroke:0.15px #000000">+ y</div>
</body></html>
